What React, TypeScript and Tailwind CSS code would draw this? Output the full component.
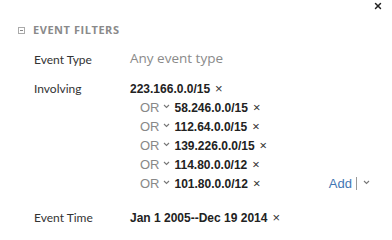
import { X } from 'lucide-react';

const ors = ['58.246.0.0/15', '112.64.0.0/15', '139.226.0.0/15', '114.80.0.0/12', '101.80.0.0/12'];

function Chevron() {
  return (
    <svg width="7" height="5" viewBox="0 0 7 5" className="mt-[-3px]">
      <path d="M1 1l2.5 2.5L6 1" fill="none" stroke="#777" strokeWidth="1.1" />
    </svg>
  );
}

function Remove() {
  return <span className="ml-[5px] text-[13px] font-normal text-[#333]">×</span>;
}

export default function App() {
  const label = "text-[12px] text-[#333] font-['Lato',sans-serif]";
  const value = "text-[12px] font-bold text-[#222] font-['Liberation_Sans',Arial,sans-serif]";

  return (
    <div className="relative w-[392px] h-[240px] bg-white overflow-hidden">
      <button className="absolute right-[9px] top-[1px] text-[#222]">
        <X className="w-[10px] h-[10px]" strokeWidth={3.5} />
      </button>

      <div className="pt-[23px] pl-[18px]">
        {/* header */}
        <div className="flex items-center h-[14px] gap-[8px]">
          <span className="w-[7px] h-[7px] border border-[#aaa] flex items-center justify-center">
            <span className="w-[3px] h-px bg-[#888]" />
          </span>
          <span className="text-[11px] font-bold tracking-[0.55px] text-[#8a8a8a] font-['Open_Sans',sans-serif]">
            EVENT FILTERS
          </span>
        </div>

        <div className="flex items-center mt-[11px] h-[20px]">
          <span className={`${label} w-[112px] pl-[16px] pt-[3px]`}>Event Type</span>
          <span className="text-[13.5px] text-[#8a8a8a] font-['Open_Sans',sans-serif]">Any event type</span>
        </div>

        <div className="flex mt-[12px]">
          <span className={`${label} w-[112px] pl-[16px] h-[18px] flex items-center`}>Involving</span>
          <div className="flex-1 flex flex-col">
            <div className={`${value} h-[18px] flex items-center`}>
              223.166.0.0/15<Remove />
            </div>
            {ors.map((ip, i) => (
              <div key={ip} className="h-[19px] flex items-center pl-[10px]">
                <span className="text-[13px] text-[#888] font-['Liberation_Sans',Arial,sans-serif]">OR</span>
                <span className="ml-[3px] mr-[5px] flex items-center"><Chevron /></span>
                <span className={value}>{ip}</span>
                <Remove />
                {i === ors.length - 1 && (
                  <div className="ml-auto mr-[22px] flex items-center gap-[4px]">
                    <span className="text-[13px] text-[#4276b3] font-['Liberation_Sans',Arial,sans-serif]">Add</span>
                    <span className="w-px h-[13px] bg-[#999]" />
                    <span className="ml-[2px] flex items-center"><Chevron /></span>
                  </div>
                )}
              </div>
            ))}
          </div>
        </div>

        <div className="flex items-center mt-[15px] h-[20px]">
          <span className={`${label} w-[112px] pl-[16px]`}>Event Time</span>
          <span className={value}>
            Jan 1 2005--Dec 19 2014<Remove />
          </span>
        </div>
      </div>
    </div>
  );
}
